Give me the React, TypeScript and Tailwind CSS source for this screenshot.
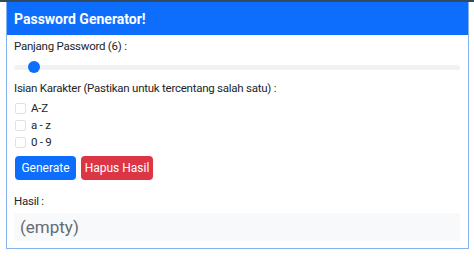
import { useState } from "react";

export default function App() {
  const [length, setLength] = useState(6);
  const [upper, setUpper] = useState(false);
  const [lower, setLower] = useState(false);
  const [digit, setDigit] = useState(false);
  const [result, setResult] = useState("");

  const generate = () => {
    let chars = "";
    if (upper) chars += "ABCDEFGHIJKLMNOPQRSTUVWXYZ";
    if (lower) chars += "abcdefghijklmnopqrstuvwxyz";
    if (digit) chars += "0123456789";
    if (!chars) return;
    let out = "";
    for (let i = 0; i < length; i++) out += chars[Math.floor(Math.random() * chars.length)];
    setResult(out);
  };

  const options = [
    { label: "A-Z", checked: upper, set: setUpper },
    { label: "a - z", checked: lower, set: setLower },
    { label: "0 - 9", checked: digit, set: setDigit },
  ];

  return (
    <div className="w-[474px] h-[258px] bg-white font-['Roboto',sans-serif] text-[#212529] overflow-hidden">
      <div className="h-[2px] bg-[#34495e]" />
      <div className="mx-[6px] w-[463px] border border-t-0 border-[#86b2ee]">
        {/* Header */}
        <div className="h-[33px] bg-[#0d6efd] px-[7px] flex items-center">
          <h1 className="text-white font-bold text-[14px] leading-none">Password Generator!</h1>
        </div>

        {/* Body */}
        <div className="px-[7px] pt-[2px] pb-[7px] text-[11.5px] tracking-[-0.25px]">
          <p className="leading-[18px]">Panjang Password ({length}) :</p>

          {/* Slider */}
          <div className="relative h-[14px] mt-[5px] mr-[1px] flex items-center">
            <div className="h-[5px] w-full rounded-full bg-[#f1f2f3]" />
            <div
              onClick={() => setLength(length)}
              className="absolute left-[14px] top-[1px] w-[12px] h-[12px] rounded-full bg-[#0d6efd]"
            />
          </div>

          <p className="leading-[18px] mt-[5px]">Isian Karakter (Pastikan untuk tercentang salah satu) :</p>

          <div className="mt-[3px] flex flex-col">
            {options.map((o) => (
              <label key={o.label} className="h-[17px] flex items-center gap-[5px] cursor-pointer">
                <span
                  onClick={() => o.set(!o.checked)}
                  className={`w-[11px] h-[11px] rounded-[2px] border ml-[1px] ${
                    o.checked ? "bg-[#0d6efd] border-[#0d6efd]" : "bg-white border-[#dee2e6]"
                  }`}
                />
                <span className="leading-none">{o.label}</span>
              </label>
            ))}
          </div>

          <div className="mt-[5px] flex gap-[5px] ml-[1px]">
            <button
              onClick={generate}
              className="h-[24px] w-[61px] rounded-[4px] bg-[#0d6efd] text-white text-[12px] tracking-normal leading-none"
            >
              Generate
            </button>
            <button
              onClick={() => setResult("")}
              className="h-[24px] w-[72px] rounded-[4px] bg-[#dc3545] text-white text-[12px] tracking-normal leading-none"
            >
              Hapus Hasil
            </button>
          </div>

          <p className="leading-[18px] mt-[12px]">Hasil :</p>

          <div className="mt-[3px] mr-[1px] h-[28px] bg-[#f8f9fa] px-[6px] flex items-center">
            <span className="text-[17px] tracking-normal leading-none text-[#646c73]">{result || "(empty)"}</span>
          </div>
        </div>
      </div>
    </div>
  );
}
